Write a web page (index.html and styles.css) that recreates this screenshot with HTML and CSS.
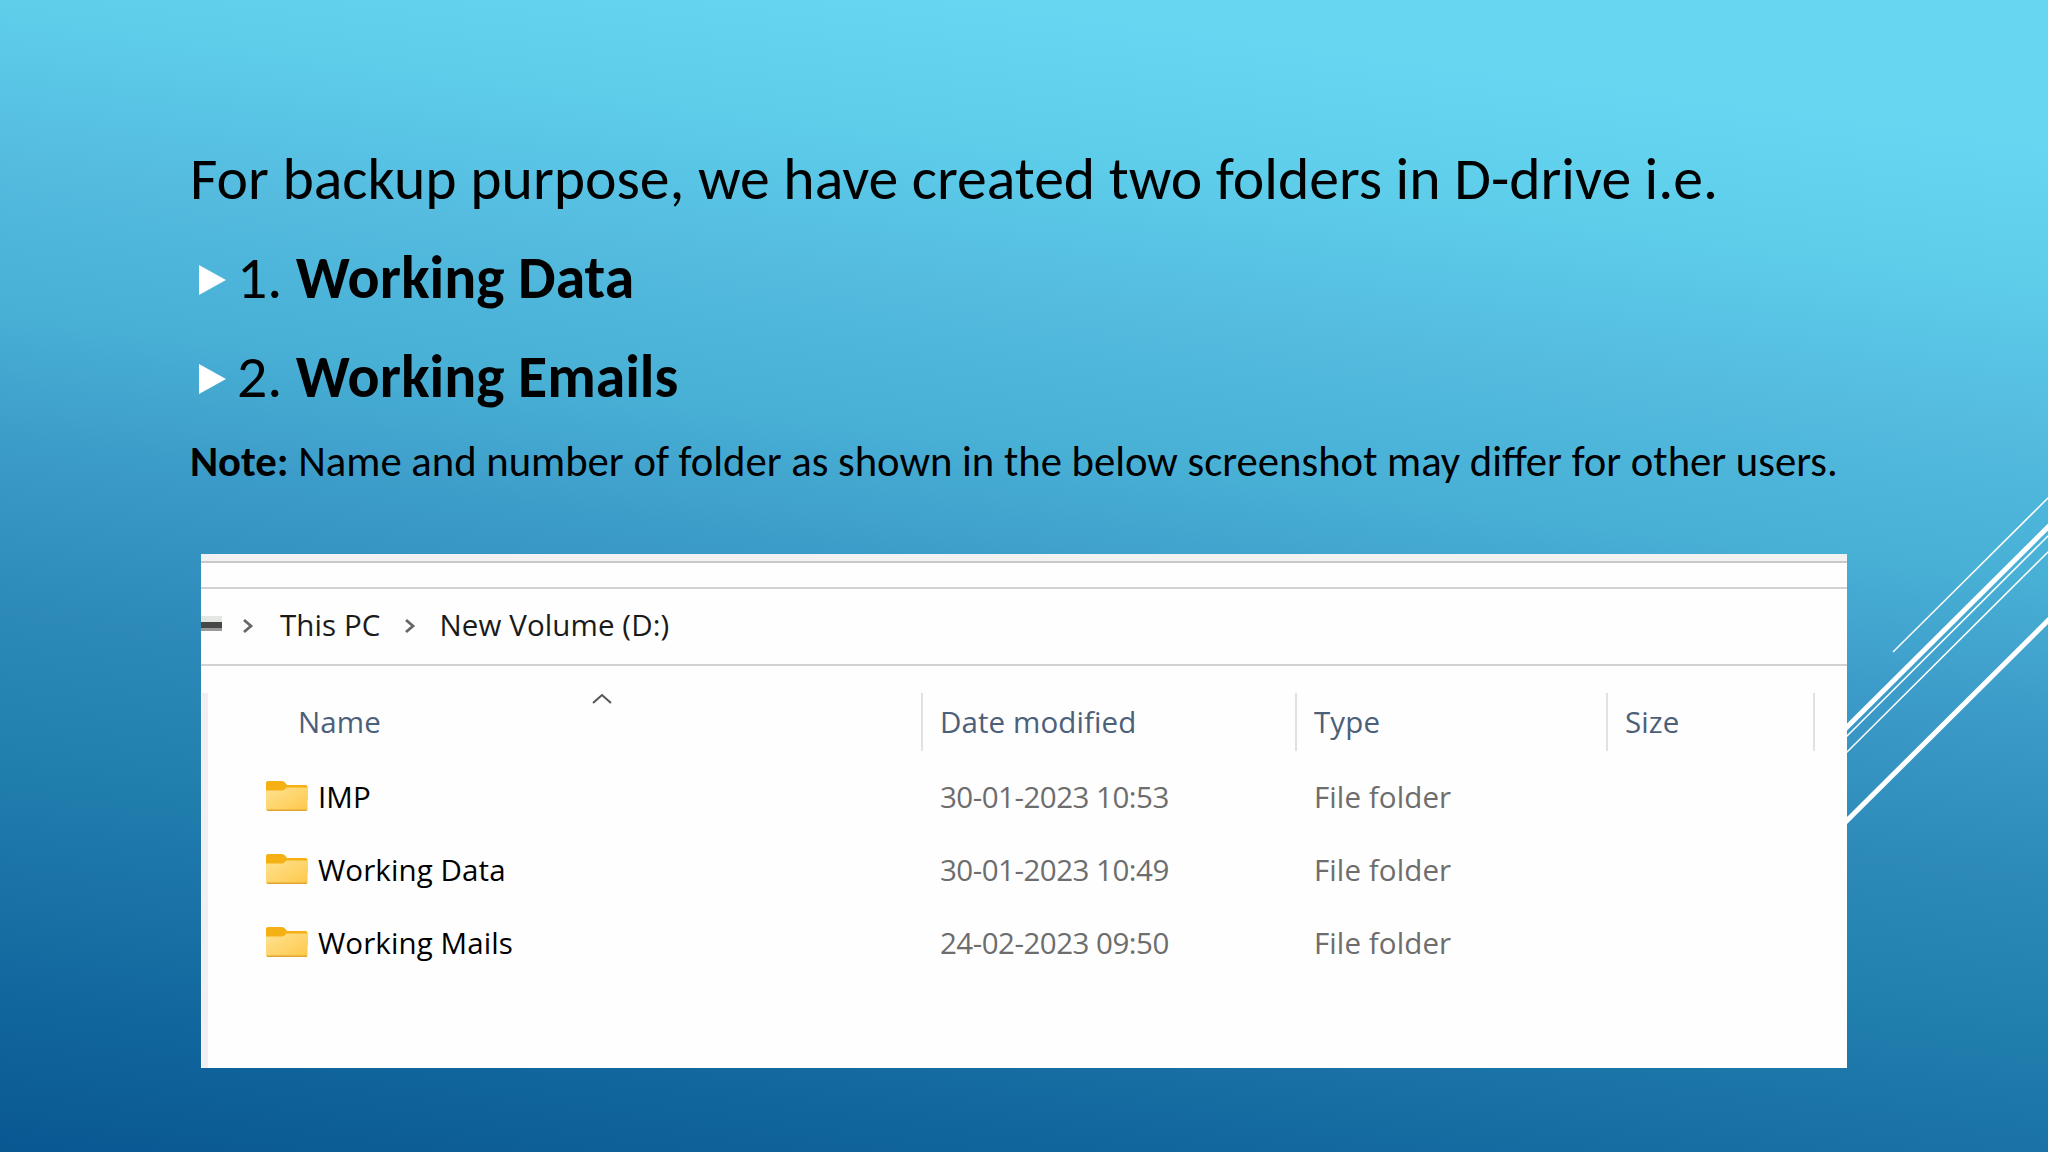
FILE: index.html
```
<!DOCTYPE html>
<html lang="en">
<head>
<meta charset="UTF-8">
<meta name="viewport" content="width=device-width, initial-scale=1">
<title>Backup folders</title>
<link rel="stylesheet" href="styles.css">
</head>
<body>

<!-- folder icon shared by the rows -->
<svg class="defs" width="0" height="0">
  <linearGradient id="folderFront" x1="0" y1="0" x2="1" y2="1">
    <stop offset="0" stop-color="#ffe293"/>
    <stop offset="1" stop-color="#fdc848"/>
  </linearGradient>
  <symbol id="folder" viewBox="0 0 42 32">
    <path d="M0 3Q0 1 2 1H16Q18 1 19 2.500L21 5H39.500Q41.500 5 41.500 7V20H0Z" fill="#f5b013"/>
    <path d="M0 10.500H15.500Q17.500 10.500 19 9L20.500 7.500H40Q41.500 7.500 41.500 9V29.500Q41.500 31 40 31H2Q0 31 0 29.500Z" fill="url(#folderFront)"/>
    <path d="M.5 29.500Q1 31 2.500 31H39Q41 31 41.300 29.500Z" fill="#e2a530"/>
  </symbol>
</svg>

<main class="slide">
  <svg class="stripes" viewBox="0 0 208 340">
    <path class="thin" d="M53 170L210 14"/>
    <path class="thick" d="M0 252L212 41"/>
    <path class="thin" d="M0 261L210 52"/>
    <path class="thin" d="M0 277L210 68"/>
    <path class="thick" d="M0 345.500L212 134.500"/>
  </svg>

  <section class="intro">
    <p>For backup purpose, we have created two folders in D-drive i.e.</p>
    <ul>
      <li>1. <b>Working Data</b></li>
      <li>2. <b>Working Emails</b></li>
    </ul>
    <p class="note"><b>Note:</b> Name and number of folder as shown in the below screenshot may differ for other users.</p>
  </section>

  <section class="explorer">
    <div class="titlebar"></div>
    <div class="ribbon"></div>
    <nav class="address">
      <span class="drive"></span>
      <svg class="sep" viewBox="0 0 12 16"><path d="M2 2L9 8L2 14"/></svg>
      <span class="crumb">This PC</span>
      <svg class="sep" viewBox="0 0 12 16"><path d="M2 2L9 8L2 14"/></svg>
      <span>New Volume (D:)</span>
    </nav>
    <div class="files">
      <div class="row head">
        <span class="name">Name
          <svg class="sort" viewBox="0 0 20 11"><path d="M1 10L10 2L19 10"/></svg>
        </span>
        <span>Date modified</span>
        <span>Type</span>
        <span>Size</span>
      </div>
      <div class="row">
        <span class="name"><svg class="folder"><use href="#folder"/></svg>IMP</span>
        <span class="date">30-01-2023 10:53</span>
        <span>File folder</span>
      </div>
      <div class="row">
        <span class="name"><svg class="folder"><use href="#folder"/></svg>Working Data</span>
        <span class="date">30-01-2023 10:49</span>
        <span>File folder</span>
      </div>
      <div class="row">
        <span class="name"><svg class="folder"><use href="#folder"/></svg>Working Mails</span>
        <span class="date">24-02-2023 09:50</span>
        <span>File folder</span>
      </div>
    </div>
  </section>
</main>

</body>
</html>
```
FILE: styles.css
```
* {
  box-sizing: border-box;
}
body {
  margin: 0;
  font-family: Calibri, Carlito, Lato, sans-serif;
  color: #000;
}
.defs {
  position: absolute;
}
.slide {
  position: relative;
  width: 2048px;
  height: 1152px;
  padding: 142px 201px 0;
  overflow: hidden;
  background: linear-gradient(187.5deg, #66d6f1 0%, #66d6f1 10%, #5dcdea 20%, #55bce0 30%, #48afd5 41%, #3b9ac8 51%, #2d8ab8 62%, #2180ae 72%, #1a72a6 81%, #10669c 90%, #0a5792 100%);
}

/* diagonal lines on the right edge */
.stripes {
  position: absolute;
  right: 0;
  top: 482px;
  width: 208px;
  height: 340px;
  overflow: visible;
}
.stripes path {
  stroke: #fff;
  fill: none;
}
.stripes .thin {
  stroke-width: 1.5;
}
.stripes .thick {
  stroke-width: 5;
}

.intro {
  margin-left: -11px;
  font-size: 59.7px;
  line-height: 73px;
  white-space: nowrap;
}
.intro p {
  margin: 0;
}
.intro ul {
  list-style: none;
  margin: 0 0 22px;
  padding: 0;
}
.intro li {
  display: flex;
  align-items: center;
  margin-top: 26px;
  white-space: pre;
}
.intro li::before {
  content: "";
  margin: 4px 11px 0 9px;
  border-left: 27px solid #fff;
  border-top: 15.5px solid transparent;
  border-bottom: 15.5px solid transparent;
}
.intro .note {
  font-size: 42.7px;
  line-height: 52px;
}

.explorer {
  width: 1645.5px;
  height: 514px;
  margin-top: 67px;
  background: #fefefe;
  font-family: "Segoe UI", "Open Sans", sans-serif;
  font-size: 29.5px;
  letter-spacing: 0.1px;
  white-space: nowrap;
}
.titlebar {
  height: 9px;
  background: #f3f2f3;
  border-bottom: 2px solid #c8c8ca;
}
.ribbon {
  height: 26px;
  border-bottom: 2px solid #d2d2d4;
}
.address {
  display: flex;
  align-items: center;
  height: 77px;
  padding-bottom: 4px;
  border-bottom: 2px solid #d2d2d4;
  color: #1a1a1a;
}
.drive {
  width: 21px;
  height: 15px;
  margin: 0 20px 2px 0;
  background: linear-gradient(#e4e6e4 0 6px, #454845 6px 12px, #999 12px);
}
.sep {
  width: 12px;
  height: 16px;
  margin-top: 3px;
}
.sep path {
  fill: none;
  stroke: #666;
  stroke-width: 2.8;
}
.crumb {
  margin: 0 23px 0 26px;
}
.address span:last-child {
  margin-left: 24px;
}

.files {
  height: 402px;
  padding-top: 27px;
  background: linear-gradient(#f0f0f2, #f0f0f2) 1px 27px / 6px 100% no-repeat;
}
.row {
  display: grid;
  grid-template-columns: 722px 374px 311px 207px;
  height: 73px;
  line-height: 73px;
  color: #6d6d6d;
}
.row span {
  padding-left: 17px;
}
.row .name {
  display: flex;
  align-items: center;
  padding-left: 65px;
  color: #000;
}
.row .date {
  letter-spacing: -0.5px;
}
.folder {
  width: 42px;
  height: 32px;
  margin: 0 10px 2px 0;
}
.head {
  height: 58px;
  margin-bottom: 9px;
  line-height: 58px;
}
.head span {
  border-right: 2px solid #e0e1e5;
  color: #4c607a;
}
.head .name {
  position: relative;
  padding-left: 97px;
  color: #4c607a;
}
.sort {
  position: absolute;
  left: 391px;
  top: 0;
  width: 20px;
  height: 11px;
}
.sort path {
  fill: none;
  stroke: #555;
  stroke-width: 2;
}
```
